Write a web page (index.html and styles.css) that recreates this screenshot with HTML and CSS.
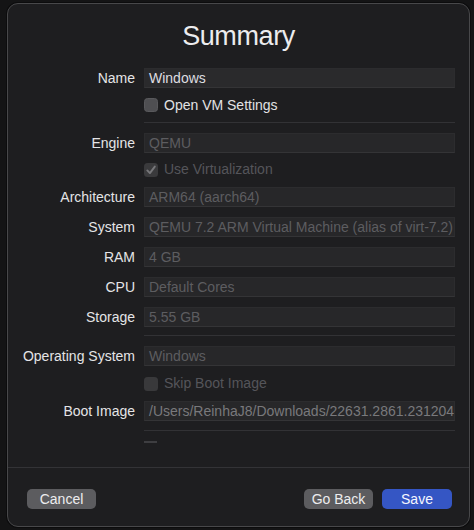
FILE: index.html
```html
<!DOCTYPE html>
<html lang="en">
<head>
<meta charset="utf-8">
<title>Summary</title>
<link rel="stylesheet" href="styles.css">
</head>
<body>
<div class="sheet">
  <h1 class="title">Summary</h1>
  <div class="form">
    <div class="label">Name</div>
    <div class="field field-active">Windows</div>

    <label class="check-row">
      <span class="box box-enabled"></span>
      <span class="check-text">Open VM Settings</span>
    </label>

    <div class="sep"></div>

    <div class="label">Engine</div>
    <div class="field">QEMU</div>

    <label class="check-row disabled">
      <span class="box box-checked">
        <svg viewBox="0 0 14 14" width="14" height="14"><path d="M3.3 7.4 L5.9 10.1 L10.8 3.6" fill="none" stroke="#77777a" stroke-width="1.9" stroke-linecap="round" stroke-linejoin="round"/></svg>
      </span>
      <span class="check-text">Use Virtualization</span>
    </label>

    <div class="label">Architecture</div>
    <div class="field">ARM64 (aarch64)</div>

    <div class="label">System</div>
    <div class="field">QEMU 7.2 ARM Virtual Machine (alias of virt-7.2)</div>

    <div class="label">RAM</div>
    <div class="field">4 GB</div>

    <div class="label">CPU</div>
    <div class="field">Default Cores</div>

    <div class="label">Storage</div>
    <div class="field">5.55 GB</div>

    <div class="sep"></div>

    <div class="label">Operating System</div>
    <div class="field">Windows</div>

    <label class="check-row disabled">
      <span class="box"></span>
      <span class="check-text">Skip Boot Image</span>
    </label>

    <div class="label">Boot Image</div>
    <div class="field field-path">/Users/ReinhaJ8/Downloads/22631.2861.231204</div>

    <div class="sep"></div>

    <div class="dash-row"><span class="dash"></span></div>
  </div>

  <div class="footer">
    <button class="btn">Cancel</button>
    <div class="spacer"></div>
    <button class="btn">Go Back</button>
    <button class="btn btn-primary">Save</button>
  </div>
</div>
</body>
</html>
```

FILE: styles.css
```css
html, body {
  margin: 0;
  padding: 0;
}

body {
  background: #141415;
  width: 474px;
  height: 530px;
  overflow: hidden;
  font-family: "Liberation Sans", Arial, sans-serif;
  font-size: 14px;
  color: #e4e4e6;
}

.sheet {
  box-sizing: border-box;
  width: 463px;
  height: 524px;
  margin: 3px 0 0 7px;
  background: #1e1e20;
  border: 1px solid #48484a;
  border-radius: 11px;
  box-shadow: 0 0 0 1px #0c0c0d;
  display: flex;
  flex-direction: column;
}

.title {
  margin: 16px 0 0;
  height: 32px;
  font-size: 27px;
  line-height: 32px;
  font-weight: normal;
  letter-spacing: -0.4px;
  text-align: center;
  color: #ececee;
}

.form {
  margin-top: 16px;
  display: grid;
  grid-template-columns: 127px 311px;
  column-gap: 9px;
  row-gap: 9.85px;
}

.label {
  height: 20px;
  line-height: 20px;
  text-align: right;
  white-space: nowrap;
  color: #e4e4e6;
}

.field {
  grid-column: 2;
  box-sizing: border-box;
  height: 20px;
  line-height: 19px;
  padding: 0 4px;
  background: #272729;
  border: 1px solid #2c2c2e;
  border-bottom-color: #343436;
  color: #5d5d60;
  white-space: nowrap;
  overflow: hidden;
}

.field-active {
  background: #2a2a2c;
  color: #dedee0;
}

.field-path {
  color: #79797c;
}

.check-row {
  grid-column: 2;
  height: 15px;
  display: flex;
  align-items: center;
  gap: 6px;
  color: #e2e2e4;
}

.check-row.disabled {
  color: #55555a;
}

.box {
  box-sizing: border-box;
  width: 14px;
  height: 14px;
  border-radius: 3.5px;
  background: #39393b;
  display: flex;
  align-items: center;
  justify-content: center;
}

.box-enabled {
  background: #4f4f52;
  border: 1px solid #59595c;
}

.box-checked {
  background: #3a3a3c;
}

.check-text {
  line-height: 15px;
}

.sep {
  grid-column: 2;
  height: 1px;
  margin: -1px 0;
  background: #323235;
}

.dash-row {
  grid-column: 2;
  height: 4px;
}

.dash {
  display: block;
  width: 13px;
  height: 2px;
  background: #3e3e41;
}

.footer {
  margin-top: auto;
  box-sizing: border-box;
  height: 59px;
  border-top: 1px solid #333336;
  padding: 21px 17px 0 19px;
  display: flex;
  align-items: flex-start;
  gap: 9px;
}

.spacer {
  flex: 1;
}

.btn {
  box-sizing: border-box;
  width: 69px;
  height: 20px;
  padding: 0;
  border: none;
  border-radius: 5px;
  background: #5c5c5f;
  color: #ececee;
  font-family: "Liberation Sans", Arial, sans-serif;
  font-size: 14px;
  line-height: 20px;
  text-align: center;
}

.btn-primary {
  width: 70px;
  background: #3556c4;
  color: #f4f6ff;
}
```
